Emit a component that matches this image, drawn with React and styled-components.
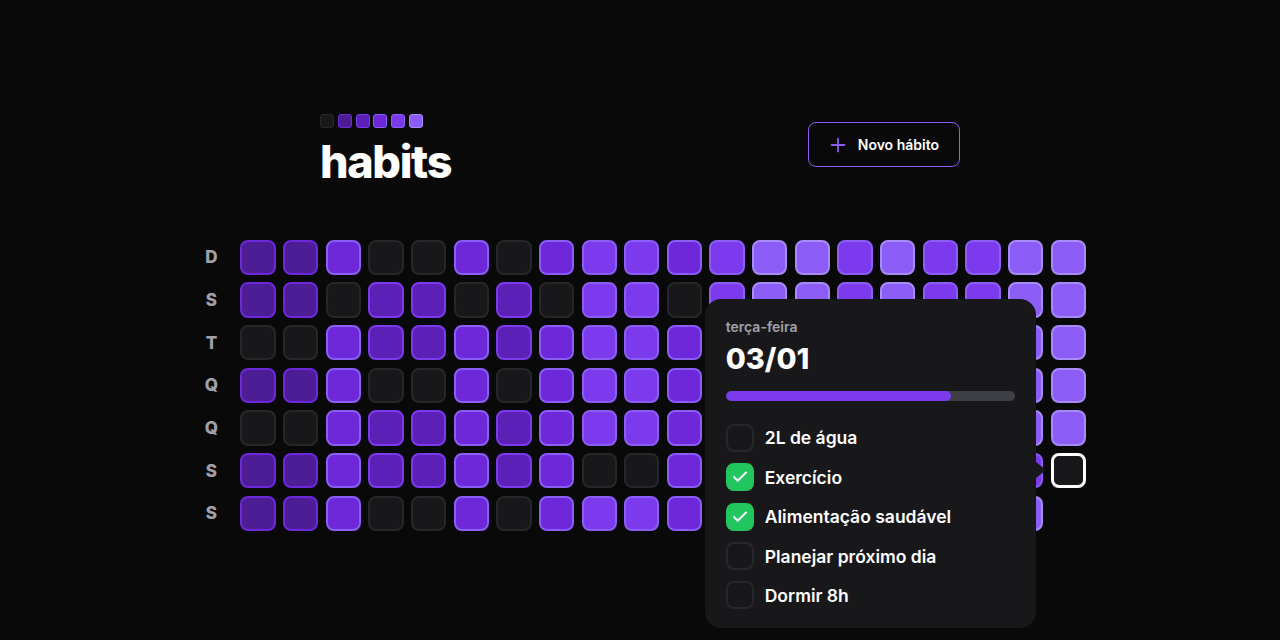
import React from "react";
import styled, { createGlobalStyle } from "styled-components";
import { Plus, Check } from "lucide-react";

const GlobalStyle = createGlobalStyle`
  * {
    box-sizing: border-box;
  }
  body {
    margin: 0;
    background: #09090a;
    color: #ffffff;
    font-family: Inter, "Noto Sans", sans-serif;
    -webkit-font-smoothing: antialiased;
  }
`;

const levels = [
  { bg: "#18181b", border: "#27272a" },
  { bg: "#4c1d95", border: "#6d28d9" },
  { bg: "#5b21b6", border: "#7c3aed" },
  { bg: "#6d28d9", border: "#8b5cf6" },
  { bg: "#7c3aed", border: "#8b5cf6" },
  { bg: "#8b5cf6", border: "#a78bfa" },
];

const weekDays = ["D", "S", "T", "Q", "Q", "S", "S"];

// one string per week day, one char per week: 0-5 level, x = today, - = no day yet
const rows = [
  "11300303443455454455",
  "11022020440455454455",
  "00322323443455454455",
  "11300303443454454555",
  "00322323443545445455",
  "1132232300345454454x",
  "1130030344345544545-",
];

const habits = [
  { title: "2L de água", done: false },
  { title: "Exercício", done: true },
  { title: "Alimentação saudável", done: true },
  { title: "Planejar próximo dia", done: false },
  { title: "Dormir 8h", done: false },
];

const SQUARE = 35.3;
const GAP = 7.37;

const Page = styled.div`
  min-height: 100vh;
  display: flex;
  flex-direction: column;
  align-items: center;
  padding-top: 114px;
  gap: 59px;
`;

const Header = styled.header`
  width: 640px;
  display: flex;
  align-items: center;
  justify-content: space-between;
`;

const Brand = styled.div`
  display: flex;
  flex-direction: column;
  gap: 14.6px;
`;

const LogoRow = styled.div`
  display: flex;
  gap: 3.8px;
`;

const LogoSquare = styled.span`
  width: 14px;
  height: 14px;
  border-radius: 3px;
  background: ${(p) => levels[p.$level].bg};
  border: 1px solid ${(p) => levels[p.$level].border};
`;

const Title = styled.h1`
  margin: 0;
  font-size: 45px;
  line-height: 38px;
  font-weight: 800;
  letter-spacing: -0.03em;
  color: #ffffff;
`;

const NewHabitButton = styled.button`
  height: 45px;
  margin-bottom: 5px;
  display: flex;
  align-items: center;
  gap: 9px;
  padding: 0 20px 0 18px;
  background: transparent;
  border: 1px solid #8b5cf6;
  border-radius: 8px;
  color: #ffffff;
  font-family: inherit;
  font-size: 14px;
  font-weight: 600;
  cursor: pointer;
`;

const Summary = styled.section`
  display: flex;
  gap: 11.3px;
`;

const DayLabels = styled.div`
  display: grid;
  grid-template-rows: repeat(7, ${SQUARE}px);
  gap: ${GAP}px;
`;

const DayLabel = styled.div`
  width: 35px;
  display: flex;
  align-items: center;
  justify-content: center;
  color: #a1a1aa;
  font-size: 17px;
  font-weight: 800;
`;

const Grid = styled.div`
  display: grid;
  grid-template-rows: repeat(7, ${SQUARE}px);
  grid-auto-columns: ${SQUARE}px;
  grid-auto-flow: column;
  gap: ${GAP}px;
`;

const Day = styled.div`
  position: relative;
  border-radius: 8px;
  background: ${(p) => levels[p.$level].bg};
  border: ${(p) =>
    p.$today ? "3px solid #ffffff" : `2px solid ${levels[p.$level].border}`};
`;

const Popover = styled.div`
  position: absolute;
  right: calc(100% + 18px);
  top: -157px;
  z-index: 10;
  width: 331px;
  padding: 18px 21px 19px;
  border-radius: 16px;
  background: #18181b;
  display: flex;
  flex-direction: column;
`;

const Arrow = styled.span`
  position: absolute;
  left: 100%;
  top: 163px;
  width: 0;
  height: 0;
  border-left: 10px solid #18181b;
  border-top: 8.5px solid transparent;
  border-bottom: 8.5px solid transparent;
`;

const WeekDay = styled.span`
  font-size: 14px;
  line-height: 20px;
  font-weight: 600;
  color: #a1a1aa;
`;

const DateText = styled.span`
  margin-top: 4.5px;
  font-size: 29px;
  line-height: 36px;
  font-weight: 800;
  color: #ffffff;
`;

const Progress = styled.div`
  margin-top: 13.5px;
  height: 10px;
  border-radius: 999px;
  background: #3f3f46;
  overflow: hidden;
`;

const ProgressFill = styled.div`
  height: 100%;
  border-radius: 999px;
  background: #7c3aed;
`;

const CheckList = styled.ul`
  list-style: none;
  margin: 23px 0 0;
  padding: 0;
  display: flex;
  flex-direction: column;
  gap: 11.4px;
`;

const CheckItem = styled.li`
  display: flex;
  align-items: center;
  gap: 11px;
`;

const CheckBox = styled.span`
  width: 28px;
  height: 28px;
  flex-shrink: 0;
  display: flex;
  align-items: center;
  justify-content: center;
  border-radius: 8px;
  background: ${(p) => (p.$checked ? "#22c55e" : "#18181b")};
  border: 2px solid ${(p) => (p.$checked ? "#22c55e" : "#27272a")};
`;

const HabitTitle = styled.span`
  font-size: 17.5px;
  font-weight: 600;
  color: #ffffff;
`;

const DayPopover = () => (
  <Popover>
    <WeekDay>terça-feira</WeekDay>
    <DateText>03/01</DateText>
    <Progress>
      <ProgressFill style={{ width: "78%" }} />
    </Progress>
    <CheckList>
      {habits.map((habit) => (
        <CheckItem key={habit.title}>
          <CheckBox $checked={habit.done}>
            {habit.done && <Check size={18} strokeWidth={2.5} color="#ffffff" />}
          </CheckBox>
          <HabitTitle>{habit.title}</HabitTitle>
        </CheckItem>
      ))}
    </CheckList>
    <Arrow />
  </Popover>
);

const App = () => {
  const weeks = rows[0].length;
  const cells = [];
  for (let w = 0; w < weeks; w++) {
    for (let d = 0; d < 7; d++) {
      const c = rows[d][w];
      if (c === "-") continue;
      if (c === "x") {
        cells.push(
          <Day key={`${w}-${d}`} $level={0} $today>
            <DayPopover />
          </Day>
        );
      } else {
        cells.push(<Day key={`${w}-${d}`} $level={Number(c)} />);
      }
    }
  }

  return (
    <>
      <GlobalStyle />
      <Page>
        <Header>
          <Brand>
            <LogoRow>
              {[0, 1, 2, 3, 4, 5].map((l) => (
                <LogoSquare key={l} $level={l} />
              ))}
            </LogoRow>
            <Title>habits</Title>
          </Brand>
          <NewHabitButton>
            <Plus size={22} strokeWidth={2} color="#8b5cf6" />
            Novo hábito
          </NewHabitButton>
        </Header>
        <Summary>
          <DayLabels>
            {weekDays.map((day, i) => (
              <DayLabel key={i}>{day}</DayLabel>
            ))}
          </DayLabels>
          <Grid>{cells}</Grid>
        </Summary>
      </Page>
    </>
  );
};

export default App;
